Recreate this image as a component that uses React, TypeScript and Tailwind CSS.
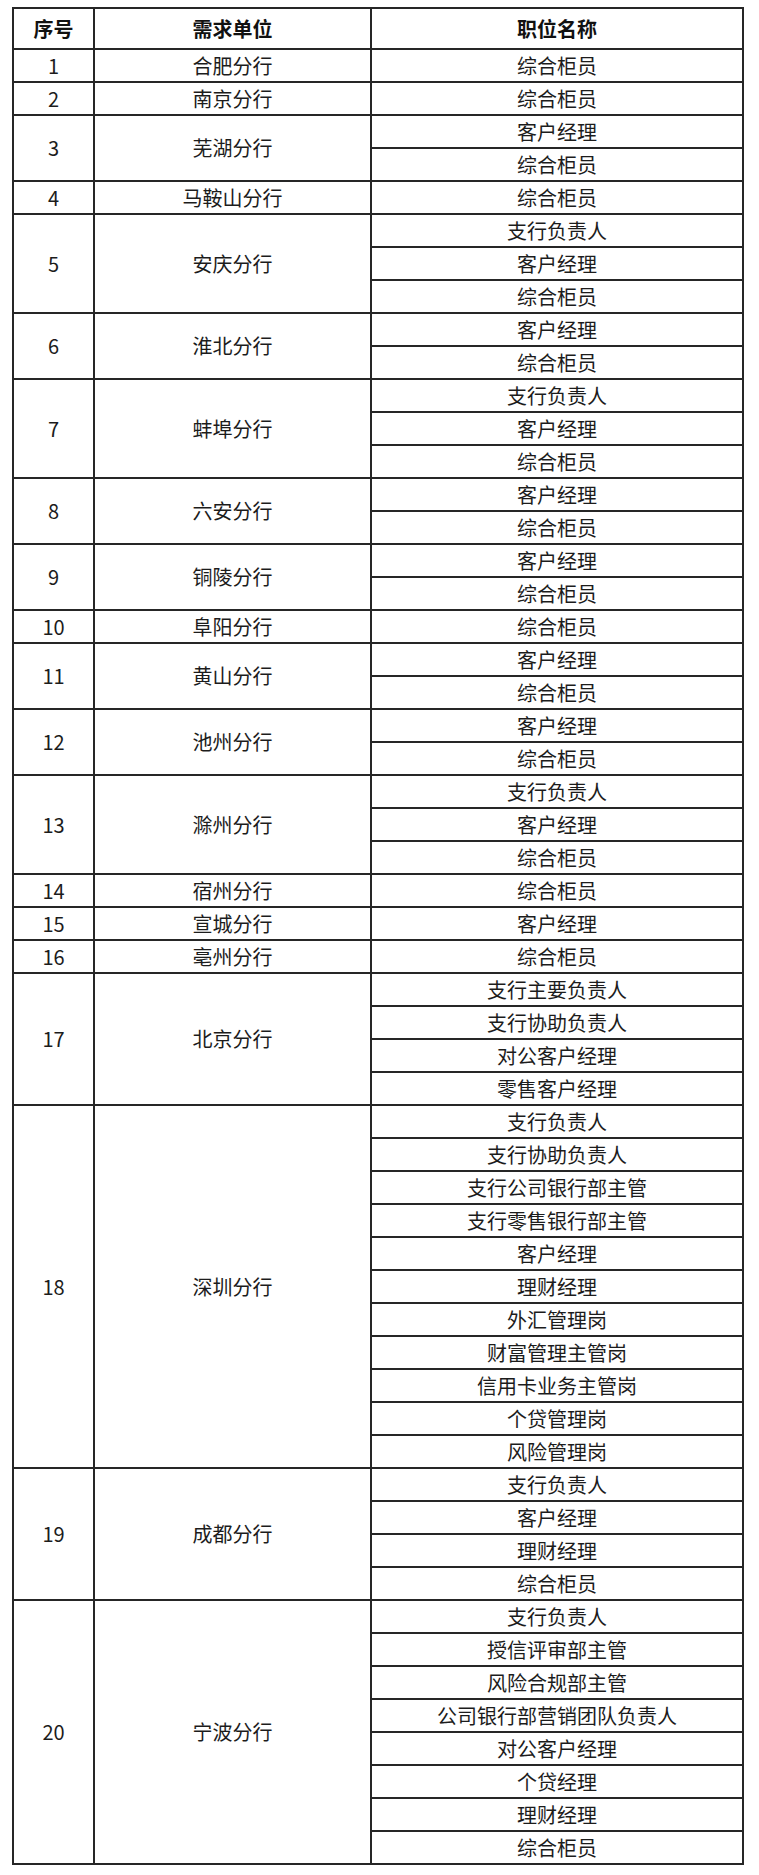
import React from "react";

type Group = { no: number; unit: string; jobs: string[] };

const groups: Group[] = [
  { no: 1, unit: "合肥分行", jobs: ["综合柜员"] },
  { no: 2, unit: "南京分行", jobs: ["综合柜员"] },
  { no: 3, unit: "芜湖分行", jobs: ["客户经理", "综合柜员"] },
  { no: 4, unit: "马鞍山分行", jobs: ["综合柜员"] },
  { no: 5, unit: "安庆分行", jobs: ["支行负责人", "客户经理", "综合柜员"] },
  { no: 6, unit: "淮北分行", jobs: ["客户经理", "综合柜员"] },
  { no: 7, unit: "蚌埠分行", jobs: ["支行负责人", "客户经理", "综合柜员"] },
  { no: 8, unit: "六安分行", jobs: ["客户经理", "综合柜员"] },
  { no: 9, unit: "铜陵分行", jobs: ["客户经理", "综合柜员"] },
  { no: 10, unit: "阜阳分行", jobs: ["综合柜员"] },
  { no: 11, unit: "黄山分行", jobs: ["客户经理", "综合柜员"] },
  { no: 12, unit: "池州分行", jobs: ["客户经理", "综合柜员"] },
  { no: 13, unit: "滁州分行", jobs: ["支行负责人", "客户经理", "综合柜员"] },
  { no: 14, unit: "宿州分行", jobs: ["综合柜员"] },
  { no: 15, unit: "宣城分行", jobs: ["客户经理"] },
  { no: 16, unit: "亳州分行", jobs: ["综合柜员"] },
  {
    no: 17,
    unit: "北京分行",
    jobs: ["支行主要负责人", "支行协助负责人", "对公客户经理", "零售客户经理"],
  },
  {
    no: 18,
    unit: "深圳分行",
    jobs: [
      "支行负责人",
      "支行协助负责人",
      "支行公司银行部主管",
      "支行零售银行部主管",
      "客户经理",
      "理财经理",
      "外汇管理岗",
      "财富管理主管岗",
      "信用卡业务主管岗",
      "个贷管理岗",
      "风险管理岗",
    ],
  },
  { no: 19, unit: "成都分行", jobs: ["支行负责人", "客户经理", "理财经理", "综合柜员"] },
  {
    no: 20,
    unit: "宁波分行",
    jobs: [
      "支行负责人",
      "授信评审部主管",
      "风险合规部主管",
      "公司银行部营销团队负责人",
      "对公客户经理",
      "个贷经理",
      "理财经理",
      "综合柜员",
    ],
  },
];

const spanClass: Record<number, string> = {
  1: "row-span-1",
  2: "row-span-2",
  3: "row-span-3",
  4: "row-span-4",
  8: "row-span-8",
  11: "row-span-11",
};

const cell =
  "bg-white flex items-center justify-center text-[20px] leading-none text-[#1c1c1c] whitespace-nowrap";

export default function App() {
  return (
    <div className="w-[759px] h-[1875px] bg-white pt-[7px] pl-[12px] font-['Noto_Sans_CJK_SC','Noto_Sans',sans-serif]">
      <div className="grid w-fit grid-cols-[79px_275px_370px] grid-rows-[39px_repeat(55,31px)] gap-[2px] p-[2px] bg-[#262626]">
        <div className={`${cell} font-bold text-[#111]`}>序号</div>
        <div className={`${cell} font-bold text-[#111]`}>需求单位</div>
        <div className={`${cell} font-bold text-[#111]`}>职位名称</div>
        {groups.map((g) => (
          <React.Fragment key={g.no}>
            <div className={`${cell} col-start-1 ${spanClass[g.jobs.length]}`}>{g.no}</div>
            <div className={`${cell} col-start-2 ${spanClass[g.jobs.length]}`}>{g.unit}</div>
            {g.jobs.map((j, i) => (
              <div key={i} className={`${cell} col-start-3`}>
                {j}
              </div>
            ))}
          </React.Fragment>
        ))}
      </div>
    </div>
  );
}
